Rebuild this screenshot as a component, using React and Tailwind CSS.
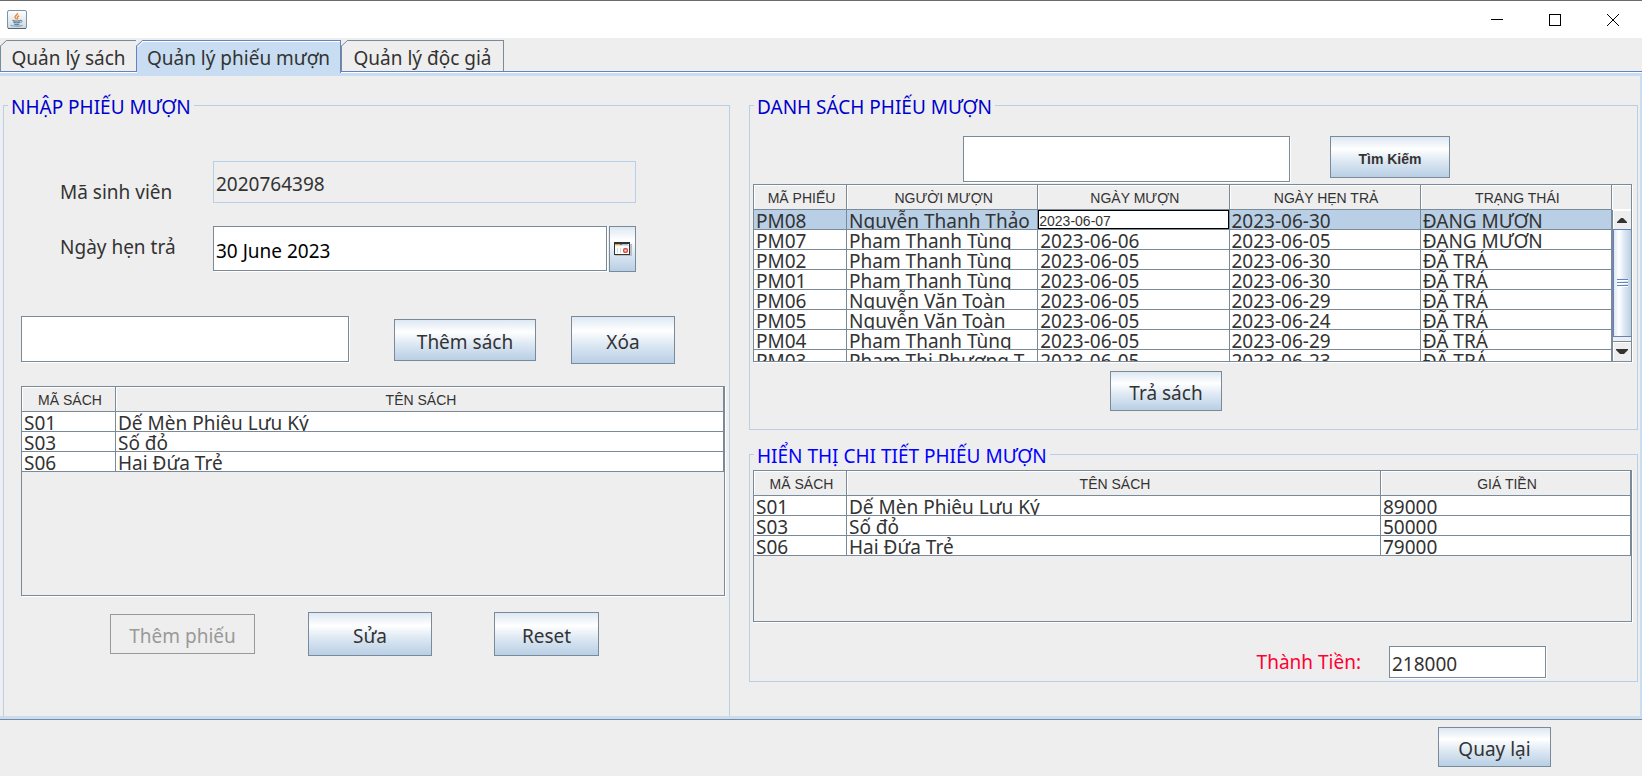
import React from "react";

const loans = [
  ["PM08", "Nguyễn Thanh Thảo", "2023-06-07", "2023-06-30", "ĐANG MƯỢN"],
  ["PM07", "Phạm Thanh Tùng", "2023-06-06", "2023-06-05", "ĐANG MƯỢN"],
  ["PM02", "Phạm Thanh Tùng", "2023-06-05", "2023-06-30", "ĐÃ TRẢ"],
  ["PM01", "Phạm Thanh Tùng", "2023-06-05", "2023-06-30", "ĐÃ TRẢ"],
  ["PM06", "Nguyễn Văn Toàn", "2023-06-05", "2023-06-29", "ĐÃ TRẢ"],
  ["PM05", "Nguyễn Văn Toàn", "2023-06-05", "2023-06-24", "ĐÃ TRẢ"],
  ["PM04", "Phạm Thanh Tùng", "2023-06-05", "2023-06-29", "ĐÃ TRẢ"],
  ["PM03", "Phạm Thị Phương T...", "2023-06-05", "2023-06-23", "ĐÃ TRẢ"],
];

const books = [
  ["S01", "Dế Mèn Phiêu Lưu Ký"],
  ["S03", "Số đỏ"],
  ["S06", "Hai Đứa Trẻ"],
];

const details = [
  ["S01", "Dế Mèn Phiêu Lưu Ký", "89000"],
  ["S03", "Số đỏ", "50000"],
  ["S06", "Hai Đứa Trẻ", "79000"],
];

const FIELD =
  "block min-w-0 border border-[#7a8a99] bg-white pl-[2px] text-[19px] outline-none shadow-[1px_1px_0_#fff]";

function Button({ className = "", disabled, children, ...rest }) {
  const look = disabled
    ? "border-[#999] text-[#999] bg-[#eee]"
    : "border-[#7a8a99] bg-[linear-gradient(#dde8f3,#fff_30%,#dde8f3_60%,#b8cfe5)]";
  return (
    <button
      type="button"
      disabled={disabled}
      className={`flex shrink-0 items-center justify-center border pt-[4px] whitespace-nowrap ${look} ${className}`}
      {...rest}
    >
      {children}
    </button>
  );
}

function DataTable({ label, heads, rows, widths, selected = -1, editing = -1 }) {
  return (
    <table aria-label={label} className="w-full table-fixed border-separate border-spacing-0">
      <colgroup>
        {widths.map((w, i) => (
          <col key={i} className={w} />
        ))}
      </colgroup>
      <thead>
        <tr>
          {heads.map((h) => (
            <th
              key={h}
              className="h-[25px] border-r border-b border-[#7a8a99] bg-[#eee] p-0 pt-[2px] pl-[3px] text-center font-['Liberation_Sans',sans-serif] text-[14px] leading-[22px] font-normal shadow-[inset_1px_1px_0_#fff]"
            >
              {h}
            </th>
          ))}
        </tr>
      </thead>
      <tbody>
        {rows.map((row, r) => (
          <tr key={row[0]} className={r === selected ? "bg-[#b8cfe5]" : "bg-white"}>
            {row.map((cell, c) => (
              <td key={c} className="border-r border-b border-[#7a8a99] p-0">
                {r === selected && c === editing ? (
                  <input
                    aria-label={heads[c]}
                    defaultValue={cell}
                    className="block h-[19px] w-full border border-black bg-white pt-[2px] font-['Liberation_Sans',sans-serif] text-[14px] outline-none"
                  />
                ) : (
                  <div className="h-[19px] overflow-hidden pl-[2px] text-[19px] leading-[23px] whitespace-nowrap">
                    {cell}
                  </div>
                )}
              </td>
            ))}
          </tr>
        ))}
      </tbody>
    </table>
  );
}

function Group({ title, className = "", bodyClass = "", legendClass = "text-[#0000cc]", children }) {
  return (
    <fieldset className={`min-w-0 border border-[#b8cfe5] ${className}`}>
      <legend className={`ml-[4px] px-[3px] pt-[4px] text-[19px] leading-[22px] ${legendClass}`}>{title}</legend>
      <div className={`flex flex-col ${bodyClass}`}>{children}</div>
    </fieldset>
  );
}

function Tab({ active, className = "", children }) {
  const line = active ? "#6382bf" : "#7a8a99";
  return (
    <button
      type="button"
      role="tab"
      aria-selected={!!active}
      className={`relative pt-[3px] text-[19px] whitespace-nowrap ${className} ${
        active
          ? "-mb-[2px] h-[33px] border-t border-r border-[#6382bf] bg-[#c8ddf2] pb-[2px] shadow-[inset_0_1px_0_#fff]"
          : "h-[31px] border-t border-r border-l border-[#7a8a99] first:border-r-[#6382bf]"
      }`}
    >
      <svg className="absolute -top-px -left-px" width="8" height="7" viewBox="0 0 8 7" aria-hidden="true">
        <path d="M0 0H7L0 6Z" fill="#eee" />
        <path d="M0.5 6 L6.5 0.5 H8" fill="none" stroke={line} />
        {active && <path d="M1.5 7 L7 1.5" fill="none" stroke="#fff" />}
      </svg>
      {children}
    </button>
  );
}

function JavaIcon() {
  return (
    <svg width="20" height="20" viewBox="0 0 20 20" aria-hidden="true">
      <defs>
        <linearGradient id="plate" x1="0" y1="0" x2="0" y2="1">
          <stop offset="0" stopColor="#fff" />
          <stop offset="1" stopColor="#cfd8df" />
        </linearGradient>
      </defs>
      <rect x="0.5" y="0.5" width="19" height="18" rx="1.5" fill="url(#plate)" stroke="#7e93a3" />
      <path d="M1 18.5H19" stroke="#4d6577" />
      <path
        d="M10.5 3c.8 1.600-2.800 2.500-2.500 4.200.1.900 1.300 1.300 1.300 2.300M12.200 6c-1.700.5-2.300 1.300-1.700 2.100.4.600.2 1.100-.2 1.500"
        fill="none"
        stroke="#ec8b3c"
        strokeWidth="1.400"
      />
      <path d="M5.500 10.400c2 .9 6.500.9 8.500 0M6.300 12.200c2 .8 5 .8 6.600 0M7 14c1.500.6 4 .6 5.500 0" fill="none" stroke="#5f87a6" strokeWidth="1.300" />
      <path d="M13.800 10.500c1.800-.5 1.900 1.700-.4 2.200" fill="none" stroke="#5f87a6" />
      <path d="M3.800 15c1 1.600 10 1.500 11.700.1" fill="none" stroke="#7d9bb3" strokeWidth="1.200" />
    </svg>
  );
}

function CalendarIcon() {
  return (
    <svg width="18" height="14" viewBox="0 0 18 14" aria-hidden="true">
      <path d="M16 2h2v12H1v-1h15z" fill="#b9bfc5" />
      <rect x="0.5" y="0.5" width="15" height="12" fill="#fff" stroke="#333" />
      <rect x="0" y="0" width="16" height="2" fill="#333" />
      <rect x="1" y="2" width="5" height="1" fill="#f0a830" />
      <rect x="6" y="2" width="2" height="1" fill="#8d6e5a" />
      <rect x="8" y="2" width="6" height="1" fill="#a9bfe0" />
      <rect x="1" y="3" width="14" height="1" fill="#dcdcdc" />
      <path d="M3.500 6v5M6.500 6v5" stroke="#d8d8d8" />
      <rect x="9.700" y="6.700" width="3.600" height="3.600" rx="1" fill="#fbd5d5" stroke="#e04848" strokeWidth="1.400" />
    </svg>
  );
}

function ScrollBar() {
  return (
    <div className="flex w-[19px] shrink-0 flex-col">
      <div className="h-[25px] border-b border-white bg-[#eee] shadow-[inset_1px_1px_0_#fff]" />
      <div className="flex flex-1 flex-col border-l border-[#7a8a99]">
        <button type="button" aria-label="Cuộn lên" className="flex h-[19px] items-center justify-center border-t border-l border-white bg-[#eee] pr-[2px]">
          <svg width="10" height="5" viewBox="0 0 10 5" aria-hidden="true">
            <path d="M4 0h2l4 4v1H0V4z" fill="#333" />
          </svg>
        </button>
        <div className="flex h-[108px] items-center justify-center border border-r-0 border-[#6382bf] bg-[linear-gradient(90deg,#dde8f3,#fff_30%,#dde8f3_60%,#b8cfe5)]">
          <svg width="11" height="8" viewBox="0 0 11 8" aria-hidden="true">
            <path d="M0 .5h11M0 3.500h11M0 6.500h11" stroke="#6382bf" />
            <path d="M1 1.500h10M1 4.500h10M1 7.500h10" stroke="#fff" />
          </svg>
        </div>
        <div className="h-[5px] border-b border-[#7a8a99] bg-[#eee]" />
        <button type="button" aria-label="Cuộn xuống" className="flex flex-1 items-center justify-center border-t border-l border-white bg-[#eee] pr-[2px]">
          <svg width="12" height="6" viewBox="0 0 12 6" aria-hidden="true">
            <path d="M0 0h12v1L8 5H4L0 1z" fill="#333" />
          </svg>
        </button>
      </div>
    </div>
  );
}

export default function App() {
  return (
    <div className="flex min-h-screen flex-col bg-[#eee] font-['Noto_Sans','Open_Sans',sans-serif] text-[19px] leading-[26px] text-[#333]">
      <header className="flex h-[38px] shrink-0 items-center justify-between border-t border-[#6b6b6b] bg-white pl-[7px]">
        <JavaIcon />
        <div className="flex h-full text-black">
          <button type="button" aria-label="Thu nhỏ" className="flex w-[58px] items-center justify-center">
            <svg width="12" height="12" viewBox="0 0 12 12" aria-hidden="true">
              <path d="M0 5.500h12" stroke="currentColor" />
            </svg>
          </button>
          <button type="button" aria-label="Phóng to" className="flex w-[58px] items-center justify-center">
            <svg width="12" height="12" viewBox="0 0 12 12" aria-hidden="true">
              <rect x="0.5" y="0.5" width="11" height="11" fill="none" stroke="currentColor" />
            </svg>
          </button>
          <button type="button" aria-label="Đóng" className="flex w-[58px] items-center justify-center">
            <svg width="12" height="12" viewBox="0 0 12 12" aria-hidden="true">
              <path d="M0 0l12 12M12 0L0 12" stroke="currentColor" />
            </svg>
          </button>
        </div>
      </header>

      <nav role="tablist" className="relative z-10 flex h-[34px] shrink-0 items-start border-b border-[#6382bf] pt-[2px]">
        <Tab className="w-[137px]">Quản lý sách</Tab>
        <Tab active className="w-[204px]">Quản lý phiếu mượn</Tab>
        <Tab className="w-[163px]">Quản lý độc giả</Tab>
      </nav>

      <main className="flex flex-1 border-t border-white">
        <div className="grid flex-1 grid-cols-[727fr_889fr] gap-[19px] border-t-[3px] border-r-2 border-b-[3px] border-[#c8ddf2] pt-[16px] pr-[2px] pl-[3px]">
          <Group title="NHẬP PHIẾU MƯỢN" className="border-b-0" bodyClass="pr-[4px] pl-[17px]">
            <div className="mt-[43px] flex items-center pr-[89px] pl-[39px]">
              <label htmlFor="student" className="w-[153px] pt-[20px] leading-[22px]">Mã sinh viên</label>
              <input
                id="student"
                disabled
                defaultValue="2020764398"
                className="block h-[42px] min-w-0 flex-1 border border-[#b8cfe5] bg-[#eee] pt-[4px] pl-[2px] text-[19px] text-[#333]"
              />
            </div>
            <div className="mt-[23px] flex items-center pr-[89px] pl-[39px]">
              <label htmlFor="due" className="w-[153px] pb-[4px]">Ngày hẹn trả</label>
              <input id="due" defaultValue="30 June 2023" className={`${FIELD} h-[45px] flex-1 self-start pt-[4px] text-black`} />
              <Button aria-label="Chọn ngày" className="ml-[2px] h-[46px] w-[27px] pb-[4px]">
                <CalendarIcon />
              </Button>
            </div>
            <div className="mt-[44px] flex h-[48px] items-center">
              <input aria-label="Mã sách" className={`${FIELD} h-[46px] w-[328px] self-start`} />
              <Button className="ml-[45px] h-[42px] w-[142px]">Thêm sách</Button>
              <Button className="ml-[35px] h-[48px] w-[104px]">Xóa</Button>
            </div>
            <div className="mt-[22px] h-[210px] overflow-hidden border border-[#7a8a99] shadow-[1px_1px_0_#fff]">
              <DataTable label="Sách mượn" heads={["MÃ SÁCH", "TÊN SÁCH"]} rows={books} widths={["w-[94px]", ""]} />
            </div>
            <div className="mt-[16px] mb-[60px] flex items-center pl-[89px]">
              <Button disabled className="h-[40px] w-[145px]">Thêm phiếu</Button>
              <Button className="ml-[53px] h-[44px] w-[124px]">Sửa</Button>
              <Button className="ml-[62px] h-[44px] w-[105px]">Reset</Button>
            </div>
          </Group>

          <div className="flex min-w-0 flex-col gap-[11px]">
            <Group title="DANH SÁCH PHIẾU MƯỢN" bodyClass="pr-[5px] pb-[18px] pl-[3px]">
              <div className="mt-[18px] flex items-start pl-[210px]">
                <input aria-label="Từ khóa" className={`${FIELD} h-[46px] w-[327px]`} />
                <Button className="ml-[40px] h-[42px] w-[120px] font-['Liberation_Sans',sans-serif] text-[14px] font-bold">
                  Tìm Kiếm
                </Button>
              </div>
              <div className="mt-[2px] flex h-[178px] overflow-hidden border border-[#7a8a99] shadow-[1px_1px_0_#fff]">
                <div className="min-w-0 flex-1 overflow-hidden">
                  <DataTable
                    label="Danh sách phiếu mượn"
                    heads={["MÃ PHIẾU", "NGƯỜI MƯỢN", "NGÀY MƯỢN", "NGÀY HẸN TRẢ", "TRẠNG THÁI"]}
                    rows={loans}
                    widths={["w-[93px]", "", "", "", ""]}
                    selected={0}
                    editing={2}
                  />
                </div>
                <ScrollBar />
              </div>
              <div className="mt-[9px] flex pl-[357px]">
                <Button className="h-[40px] w-[112px]">Trả sách</Button>
              </div>
            </Group>

            <Group
              title="HIỂN THỊ CHI TIẾT PHIẾU MƯỢN"
              bodyClass="pr-[5px] pb-[3px] pl-[3px]"
              legendClass="text-[#0000ff]"
            >
              <div className="mt-[3px] h-[152px] overflow-hidden border border-[#7a8a99] shadow-[1px_1px_0_#fff]">
                <DataTable
                  label="Chi tiết phiếu mượn"
                  heads={["MÃ SÁCH", "TÊN SÁCH", "GIÁ TIỀN"]}
                  rows={details}
                  widths={["w-[93px]", "", "w-[250px]"]}
                />
              </div>
              <div className="mt-[24px] flex items-center justify-end pr-[86px]">
                <label htmlFor="total" className="mr-[28px] text-[#ff0033]">Thành Tiền:</label>
                <input id="total" defaultValue="218000" className={`${FIELD} h-[32px] w-[157px] pt-[4px]`} />
              </div>
            </Group>
          </div>
        </div>
      </main>

      <footer className="flex h-[57px] shrink-0 items-start justify-end border-t border-[#7a8a99] pt-[7px] pr-[91px]">
        <Button className="h-[40px] w-[113px]">Quay lại</Button>
      </footer>
    </div>
  );
}
